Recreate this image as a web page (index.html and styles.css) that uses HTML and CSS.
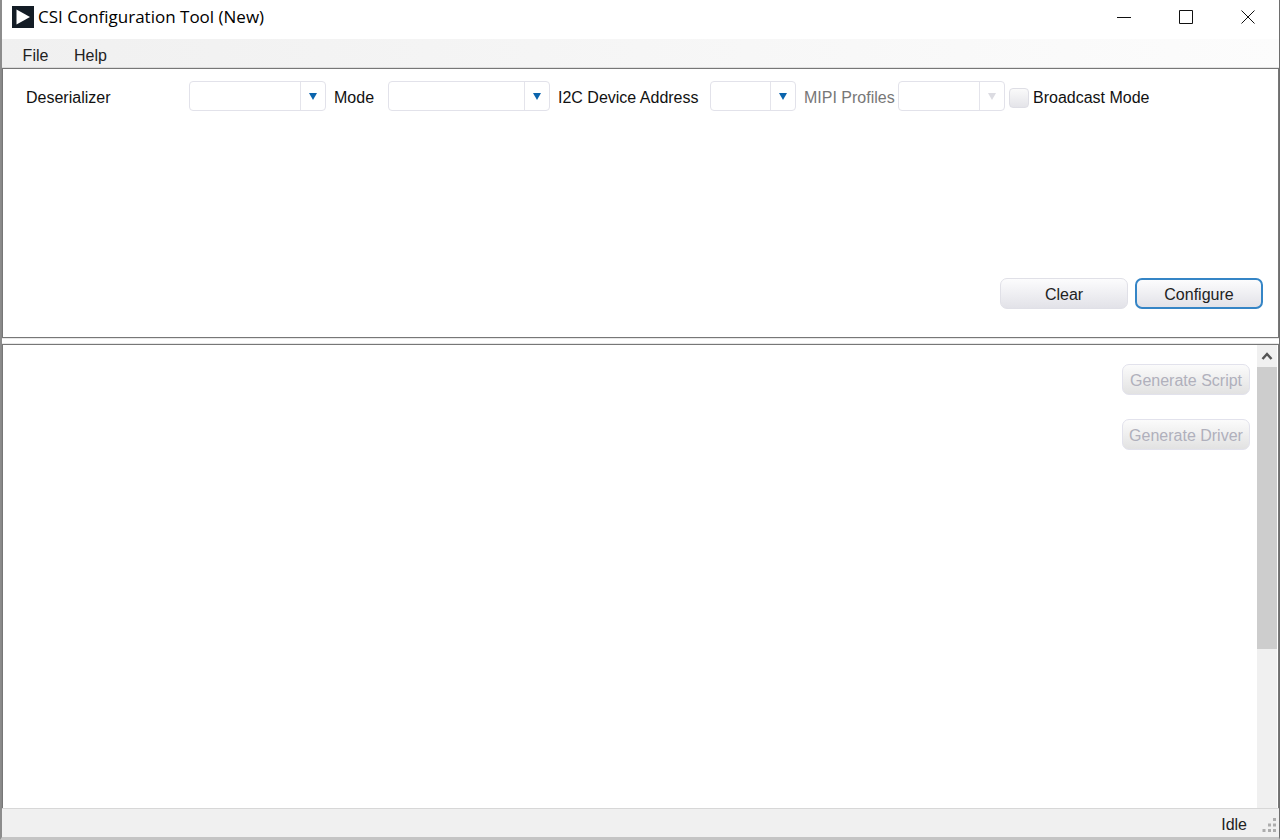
FILE: index.html
```html
<!DOCTYPE html>
<html lang="en">

<head>
    <meta charset="UTF-8">
    <meta name="viewport" content="width=device-width, initial-scale=1.0">
    <title>CSI Configuration Tool (New)</title>
    <link rel="stylesheet" href="styles.css">
</head>

<body>
    <div class="window">
        <header class="titlebar">
            <svg class="logo" viewBox="0 0 22 22" aria-hidden="true">
                <rect width="22" height="22" fill="#131c25"/>
                <path d="M4.5 3.5 L18 11 L4.5 18.5 Z" fill="#fff"/>
            </svg>
            <h1>CSI Configuration Tool (New)</h1>
            <div class="window-buttons">
                <button type="button" aria-label="Minimize">
                    <svg viewBox="0 0 14 14"><path d="M0 7.5 H14"/></svg>
                </button>
                <button type="button" aria-label="Maximize">
                    <svg viewBox="0 0 14 14"><path d="M0.5 0.5 H13.5 V13.5 H0.5 Z"/></svg>
                </button>
                <button type="button" aria-label="Close">
                    <svg viewBox="0 0 14 14"><path d="M0.5 0.5 L13.5 13.5 M13.5 0.5 L0.5 13.5"/></svg>
                </button>
            </div>
        </header>

        <nav class="menubar">
            <button type="button">File</button>
            <button type="button">Help</button>
        </nav>

        <form class="pane settings">
            <div class="fields">
                <label class="label-deserializer" for="deserializer">Deserializer</label>
                <span class="dropdown dropdown-deserializer"><select id="deserializer"></select></span>
                <label class="label-mode" for="mode">Mode</label>
                <span class="dropdown dropdown-mode"><select id="mode"></select></span>
                <label class="label-address" for="address">I2C Device Address</label>
                <span class="dropdown dropdown-address"><select id="address"></select></span>
                <label class="label-profiles" for="profiles">MIPI Profiles</label>
                <span class="dropdown dropdown-profiles disabled"><select id="profiles" disabled></select></span>
                <label class="check"><input type="checkbox"> Broadcast Mode</label>
            </div>
            <div class="actions">
                <button class="btn" type="reset">Clear</button>
                <button class="btn btn-primary" type="button">Configure</button>
            </div>
        </form>

        <main class="pane output">
            <div class="output-body">
                <button class="btn" type="button" disabled>Generate Script</button>
                <button class="btn" type="button" disabled>Generate Driver</button>
            </div>
            <div class="scrollbar">
                <div class="scroll-up">
                    <svg viewBox="0 0 12 8" aria-hidden="true"><path d="M1.5 7 L6 2 L10.5 7"/></svg>
                </div>
                <div class="scroll-thumb"></div>
            </div>
        </main>

        <footer class="statusbar">
            <span>Idle</span>
            <svg class="grip" viewBox="0 0 15 15" aria-hidden="true">
                <path d="M11 0h3v3h-3z M6 5.5h3v3H6z M11 5.5h3v3h-3z M0.5 11h3v3h-3z M6 11h3v3H6z M11 11h3v3h-3z"/>
            </svg>
        </footer>
    </div>
</body>
</html>
```
FILE: styles.css
```css
* {
    box-sizing: border-box;
}

body {
    margin: 0;
    background: #c4c4c4;
    color: #222;
    font-family: 'Liberation Sans', Arial, sans-serif;
    font-size: 16px;
}

button, select, input {
    font: inherit;
    color: inherit;
    margin: 0;
}

.window {
    display: flex;
    flex-direction: column;
    height: 100vh;
    background: #fff;
    border-left: 2px solid #8c8c8c;
    border-right: 1px solid #6e6e6e;
    border-bottom: 3px solid #c4c4c4;
}

/* title bar */
.titlebar {
    display: flex;
    align-items: center;
    height: 39px;
    padding: 0 0 5px 10px;
}

.logo {
    width: 22px;
    height: 22px;
    margin-right: 4px;
}

.titlebar h1 {
    flex: 1;
    margin: 0;
    color: #000;
    font-family: 'Open Sans', 'Segoe UI', sans-serif;
    font-size: 17px;
    font-weight: normal;
    line-height: 22px;
}

.window-buttons {
    display: flex;
}

.window-buttons button {
    width: 62px;
    height: 34px;
    padding: 0;
    background: none;
    border: 0;
}

.window-buttons svg {
    display: block;
    width: 14px;
    height: 14px;
    margin: auto;
    fill: none;
    stroke: #111;
}

/* menu */
.menubar {
    display: flex;
    height: 29px;
    padding-left: 6px;
    background: linear-gradient(to right, #f0f0f0, #fcfcfc);
}

.menubar button {
    width: 55px;
    padding: 4px 0 0;
    background: none;
    border: 0;
    text-align: center;
}

.pane {
    border: 1px solid #777;
    box-shadow: 0 0 1px #777;
}

/* settings */
.settings {
    display: flex;
    flex-direction: column;
    justify-content: space-between;
    height: 270px;
    padding: 12px 15px 28px 23px;
}

.fields {
    display: flex;
    align-items: center;
    color: #111;
    white-space: nowrap;
}

.label-deserializer { width: 163px; }
.label-mode { width: 54px; }
.label-address { width: 152px; }
.label-profiles { width: 94px; color: #777; }

.fields label {
    padding-top: 4px;
}

.dropdown {
    position: relative;
    height: 30px;
    margin-right: 8px;
}

.dropdown-deserializer { width: 137px; }
.dropdown-mode { width: 162px; }
.dropdown-address { width: 86px; }
.dropdown-profiles { width: 107px; margin-right: 4px; }

.dropdown select {
    display: block;
    width: 100%;
    height: 100%;
    padding: 0 30px 0 8px;
    appearance: none;
    background: linear-gradient(#e4e4eb, #e4e4eb) right 24px top 0 / 1px 100% no-repeat #fff;
    border: 1px solid #e2e2ea;
    border-radius: 4px;
}

.dropdown select:disabled {
    opacity: 1;
}

.dropdown::after {
    content: '';
    position: absolute;
    top: 12px;
    right: 9px;
    border: 4px solid transparent;
    border-top: 7px solid #0a64ad;
    border-bottom: 0;
    pointer-events: none;
}

.dropdown.disabled::after {
    border-top-color: #dcdce2;
}

.check {
    display: flex;
    align-items: center;
    gap: 4px;
}

.check input {
    width: 20px;
    height: 20px;
    appearance: none;
    background: linear-gradient(#fafafa, #e4e4e9);
    border: 1px solid #dedee5;
    border-radius: 4px;
}

.btn {
    width: 128px;
    height: 31px;
    padding: 3px 0 0;
    background: linear-gradient(#fcfcfd, #e2e2e8);
    border: 1px solid #e0e0e7;
    border-radius: 7px;
    text-align: center;
    white-space: nowrap;
}

.btn-primary {
    border: 2px solid #3585c6;
    padding-top: 2px;
}

.btn:disabled {
    background: linear-gradient(#fbfbfb, #e2e2e2);
    border-color: #e2e2ec;
    color: #b0b0bc;
}

.actions {
    display: flex;
    justify-content: flex-end;
    gap: 7px;
}

/* output */
.output {
    display: flex;
    flex: 1;
    margin-top: 6px;
    border-bottom: 0;
}

.output-body {
    display: flex;
    flex: 1;
    flex-direction: column;
    align-items: flex-end;
    gap: 24px;
    padding: 19px 7px;
}

.scrollbar {
    width: 21px;
    background: #f0f0f0;
    border-right: 1px solid #fff;
}

.scroll-up {
    display: flex;
    align-items: center;
    justify-content: center;
    height: 22px;
}

.scroll-up svg {
    width: 12px;
    height: 8px;
    fill: none;
    stroke: #555;
    stroke-width: 2.5;
}

.scroll-thumb {
    height: 61%;
    background: #cdcdcd;
}

/* status bar */
.statusbar {
    display: flex;
    align-items: center;
    justify-content: flex-end;
    gap: 15px;
    height: 29px;
    padding: 4px 2px 0 0;
    background: #f0f0f0;
    border-top: 1px solid #d7d7d7;
}

.grip {
    width: 15px;
    height: 15px;
    fill: #adadad;
}
```
